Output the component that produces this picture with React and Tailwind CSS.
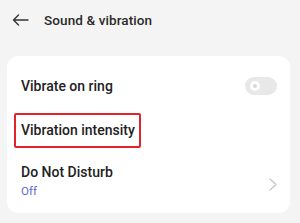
export default function App() {
  return (
    <div className="w-[300px] h-[223px] bg-[#f4f4f4] overflow-hidden font-['Roboto',sans-serif] text-[#222]">
      <header className="h-[40px] flex items-center pl-[12px]">
        <svg width="17" height="12" viewBox="0 0 17 12" fill="none" stroke="#333" strokeWidth="1.4" strokeLinecap="round" strokeLinejoin="round">
          <path d="M16 6H1.5M6.5 1L1.5 6l5 5" />
        </svg>
        <span className="ml-[15px] text-[13.5px] font-medium tracking-[0.1px] text-[#2a2a2a]">Sound &amp; vibration</span>
      </header>

      <div className="mt-[16px] ml-[7px] mr-[10px] h-[157px] bg-white rounded-[11px] pt-[8px] flex flex-col">
        <div className="h-[44px] flex items-center justify-between pl-[14px] pr-[13px]">
          <span className="text-[14px] font-medium">Vibrate on ring</span>
          <div className="w-[32px] h-[18px] rounded-full bg-[#e8e8e8] flex items-center pl-[5px]">
            <div className="w-[10px] h-[10px] rounded-full border-[3px] border-white bg-[#d9d9d9]" />
          </div>
        </div>

        <div className="mt-[5px] ml-[7px] self-start h-[35px] border-2 border-[#e0242b] rounded-[2px] flex items-center pl-[5px] pr-[4px]">
          <span className="text-[14px] font-medium">Vibration intensity</span>
        </div>

        <div className="mt-[15px] flex items-center justify-between pl-[14px] pr-[12px]">
          <div className="flex flex-col">
            <span className="text-[14px] font-medium leading-[18px]">Do Not Disturb</span>
            <span className="text-[11.5px] leading-[16px] mt-[2px] text-[#5b68d8]">Off</span>
          </div>
          <svg width="10" height="13" viewBox="0 0 10 13" fill="none" stroke="#c6c6c6" strokeWidth="1.3" strokeLinecap="round" strokeLinejoin="round" className="mt-[6px]">
            <path d="M2 1l6 5.5L2 12" />
          </svg>
        </div>
      </div>
    </div>
  );
}
